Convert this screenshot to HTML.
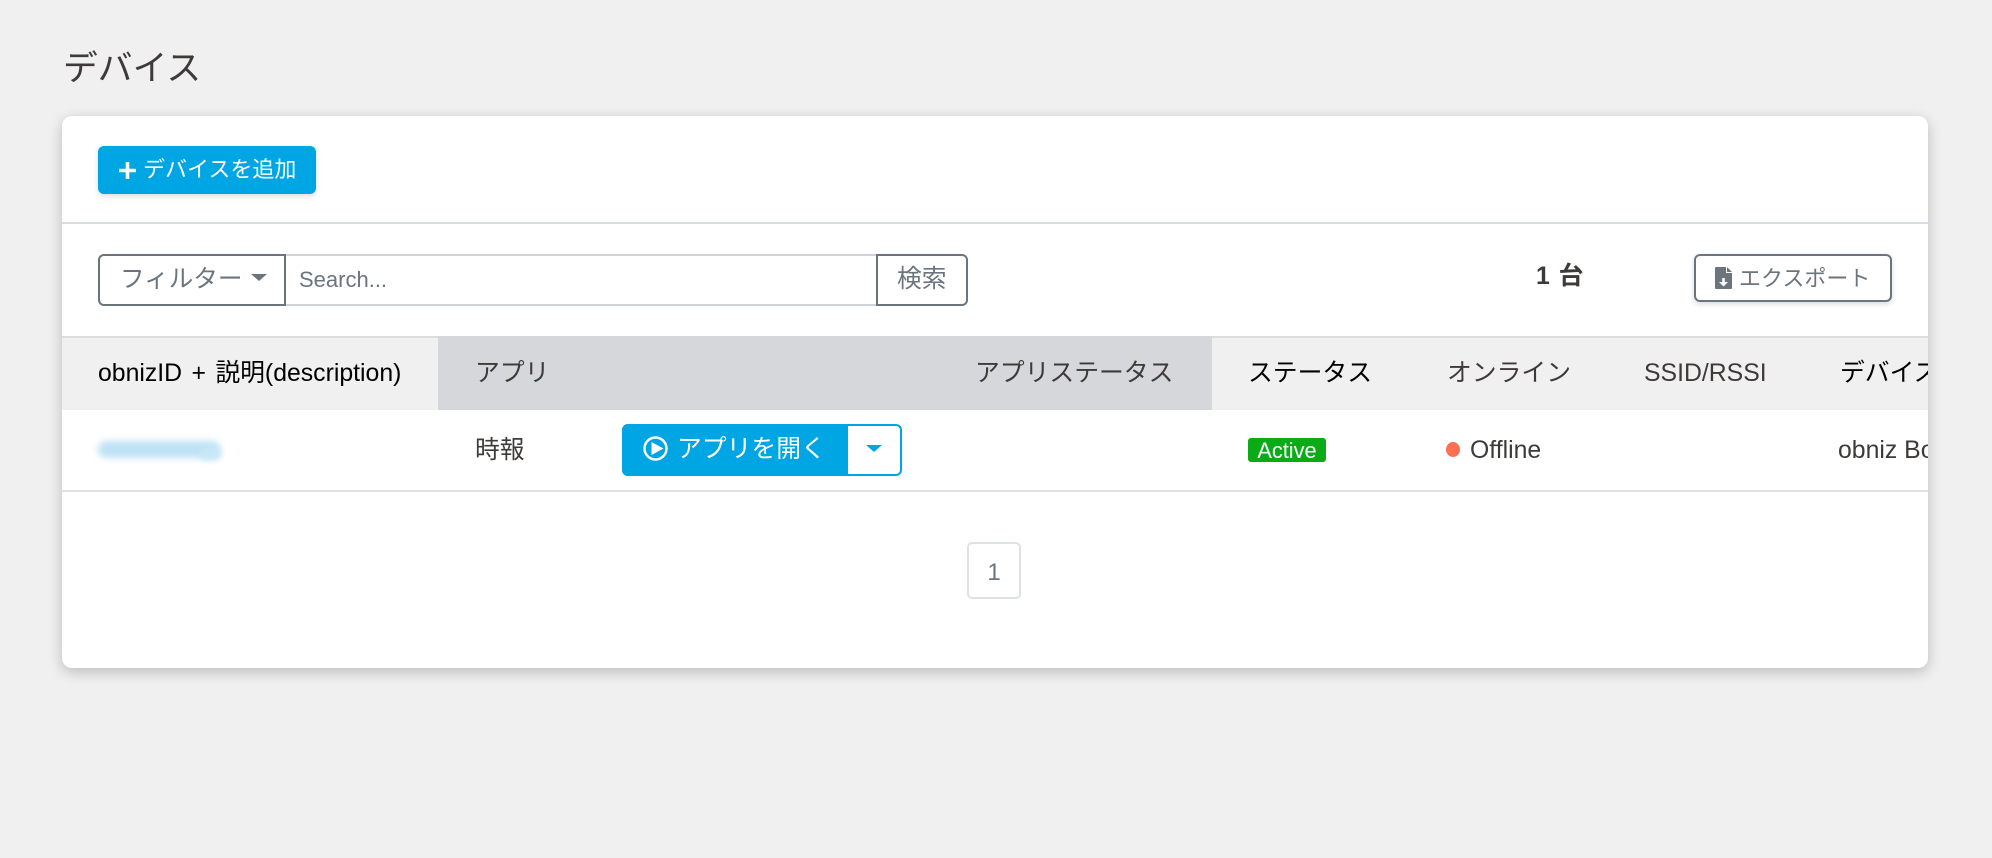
<!DOCTYPE html>
<html lang="ja"><head><meta charset="utf-8"><title>デバイス</title>
<style>
*{box-sizing:border-box}
html,body{margin:0;padding:0;width:1992px;height:858px;overflow:hidden;background:#f0f0f0}
body{font-family:"Liberation Sans","Noto Sans CJK JP",sans-serif;color:#3e3a39;position:relative}
.a{position:absolute;white-space:nowrap}
.t{line-height:30px;height:30px;font-size:24.800px}
.card{position:absolute;left:62px;top:116px;width:1866px;height:552px;background:#fff;border-radius:10px;box-shadow:0 4px 14px rgba(0,0,0,.22);overflow:hidden}
</style></head><body>
<div class="a" style="left:63px;top:47px;font-size:34.800px;line-height:44px;color:#3e3a39">デバイス</div>
<div class="card"></div>
<div class="a" style="left:98px;top:146px;width:218px;height:48px;background:#00a6e4;border-radius:6px;box-shadow:0 2px 6px rgba(0,0,0,.15)"></div>
<svg class="a" style="left:119px;top:162px" width="17" height="17" viewBox="0 0 17 17"><path d="M8.500 1v15M1 8.500h15" stroke="#fff" stroke-width="3.600" stroke-linecap="round"/></svg>
<div class="a" style="left:143px;top:155px;font-size:22px;line-height:30px;color:#fff">デバイスを追加</div>
<div class="a" style="left:62px;top:222px;width:1866px;height:2px;background:#d8dbe0"></div>

<div class="a" style="left:286px;top:254px;width:591px;height:52px;border:2px solid #ced4da;border-left:0;border-right:0;background:#fff"></div>
<div class="a" style="left:98px;top:254px;width:188px;height:52px;border:2px solid #6c757d;border-radius:6px 0 0 6px;background:#fff"></div>
<div class="a" style="left:120px;top:264px;font-size:24.600px;line-height:32px;color:#6c757d">フィルター</div>
<div class="a" style="left:251px;top:274px;width:0;height:0;border:8px solid transparent;border-top:7px solid #6c757d;border-bottom:0"></div>
<div class="a" style="left:299px;top:265px;font-size:22px;line-height:30px;color:#6c757d">Search...</div>
<div class="a" style="left:876px;top:254px;width:92px;height:52px;border:2px solid #6c757d;border-radius:0 6px 6px 0;background:#fff"></div>
<div class="a" style="left:897px;top:265px;font-size:24.800px;line-height:30px;color:#6c757d">検索</div>

<div class="a" style="left:1536px;top:262px;font-size:24.800px;line-height:30px;font-weight:700;color:#3e3a39;word-spacing:2px">1 台</div>
<div class="a" style="left:1694px;top:254px;width:198px;height:48px;border:2px solid #6c757d;border-radius:6px;background:#fff;box-shadow:0 2px 6px rgba(0,0,0,.15)"></div>
<svg class="a" style="left:1715px;top:267px" width="17" height="22" viewBox="0 0 17 22"><path d="M1 0h10v6h6v15a1 1 0 0 1-1 1H1a1 1 0 0 1-1-1V1a1 1 0 0 1 1-1zM12 0l5 5h-5z" fill="#6c757d"/><path d="M8.500 11v5" stroke="#fff" stroke-width="2.500"/><path d="M4 15h9l-4.500 4.500z" fill="#fff"/></svg>
<div class="a" style="left:1739px;top:264px;font-size:22px;line-height:30px;color:#6c757d">エクスポート</div>

<div class="a" style="left:62px;top:336px;width:1866px;height:74px;background:#f0f0f0;border-top:2px solid #dcdcde"></div>
<div class="a" style="left:438px;top:336px;width:774px;height:74px;background:#d6d7da"></div>
<div class="a t" style="left:98px;top:359px;color:#000;overflow:hidden;word-spacing:2.500px">obnizID + 説明(description)</div>
<div class="a t" style="left:475px;top:359px">アプリ</div>
<div class="a t" style="left:975px;top:359px">アプリステータス</div>
<div class="a t" style="left:1248px;top:359px;color:#000">ステータス</div>
<div class="a t" style="left:1447px;top:359px">オンライン</div>
<div class="a t" style="left:1644px;top:359px">SSID/RSSI</div>
<div class="a t" style="left:1840px;top:359px;width:88px;overflow:hidden;color:#000">デバイス</div>

<div class="a" style="left:98px;top:441px;width:122px;height:17px;border-radius:8px;background:#bfe2f5;filter:blur(3.500px)"></div>
<div class="a" style="left:200px;top:447px;width:21px;height:13px;border-radius:6px;background:#c8e7f6;filter:blur(3px)"></div>
<div class="a t" style="left:475px;top:436px">時報</div>
<div class="a" style="left:622px;top:424px;width:280px;height:52px;border:2px solid #00a6e4;border-radius:6px;background:#fff"></div>
<div class="a" style="left:622px;top:424px;width:226px;height:52px;background:#00a6e4;border-radius:6px 0 0 6px"></div>
<svg class="a" style="left:643px;top:436px" width="25" height="25" viewBox="0 0 25 25"><circle cx="12.500" cy="12.500" r="11" fill="none" stroke="#fff" stroke-width="2.400"/><path d="M8.500 6l12 6.500-12 6.500z" fill="#fff"/></svg>
<div class="a" style="left:677px;top:433px;font-size:24.800px;line-height:34px;color:#fff">アプリを開く</div>
<div class="a" style="left:866px;top:445px;width:0;height:0;border:8px solid transparent;border-top:7px solid #00a6e4;border-bottom:0"></div>
<div class="a" style="left:1248px;top:438px;width:78px;height:24px;background:#0aab16;border-radius:3px;color:#fff;font-size:21.800px;line-height:26px;text-align:center">Active</div>
<div class="a" style="left:1446px;top:442px;width:14px;height:15px;background:#ff6f52;border-radius:50%"></div>
<div class="a t" style="left:1470px;top:436px">Offline</div>
<div class="a t" style="left:1838px;top:436px;width:90px;overflow:hidden">obniz Board</div>
<div class="a" style="left:62px;top:490px;width:1866px;height:2px;background:#dee2e6"></div>

<div class="a" style="left:967px;top:542px;width:54px;height:57px;border:2px solid #dee2e6;border-radius:5px;background:#fff;color:#6c757d;font-size:24px;line-height:57px;text-align:center">1</div>
</body></html>
